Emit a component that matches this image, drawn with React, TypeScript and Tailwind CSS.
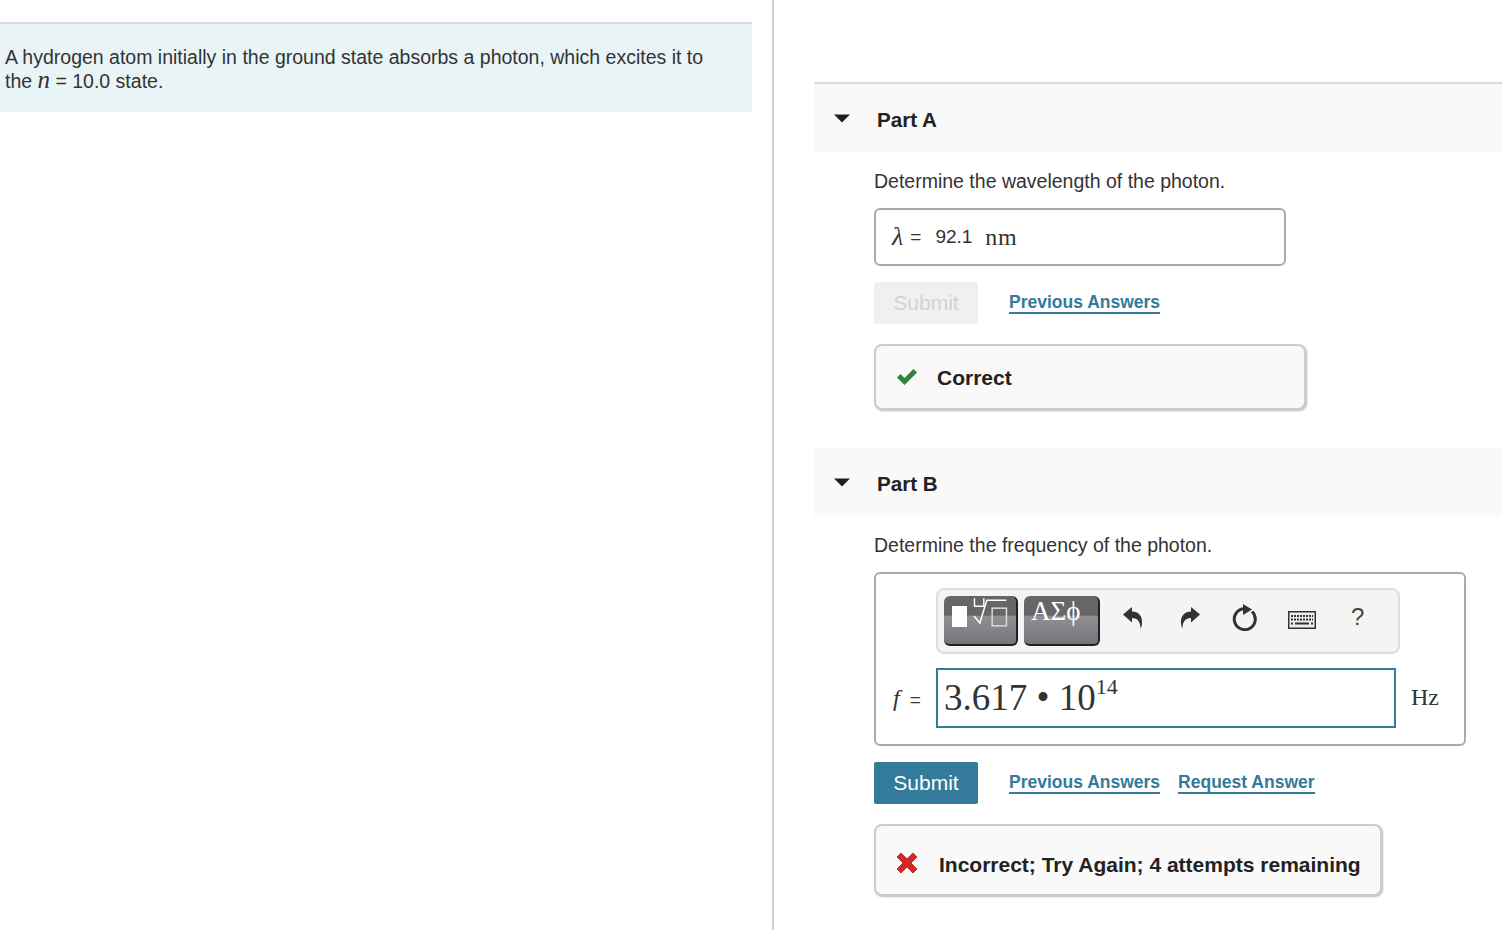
import React from 'react';

const serif = "font-['Liberation_Serif',serif]";

const Caret = () => (
  <svg width="16" height="9" viewBox="0 0 16 9" className="mt-0">
    <path d="M0 0.5H16L8 8.5Z" fill="#1f1f1f" />
  </svg>
);

const PartHeader = ({ title }: { title: string }) => (
  <div className="flex h-[68px] items-center bg-[#f9f9f9] pl-5">
    <Caret />
    <h2 className="mt-[4px] ml-[27px] text-[20.6px] font-bold text-[#222]">{title}</h2>
  </div>
);

const SubmitButton = ({ disabled }: { disabled?: boolean }) => (
  <button
    className={
      disabled
        ? 'h-[42px] w-[104px] rounded-[2px] bg-[#f0f0f0] text-[21px] text-[#d3d3d3]'
        : 'h-[42px] w-[104px] rounded-[2px] bg-[#337a9b] text-[21px] text-white'
    }
  >
    Submit
  </button>
);

const LinkText = ({ children }: { children: React.ReactNode }) => (
  <a className="border-b-2 border-[#337a9b] text-[17.5px] leading-[18px] font-bold text-[#337a9b]">{children}</a>
);

const Undo = ({ flip }: { flip?: boolean }) => (
  <svg width="22" height="24" viewBox="0 0 22 24" className={flip ? '-scale-x-100' : ''}>
    <path d="M1 9.5L10 2V6.5C16.5 6.5 20.5 11 20 18C20 20 19.5 22 18.5 23.5C18.5 17 15.5 13 10 13V17.5Z" fill="#333" />
  </svg>
);

const Keyboard = () => (
  <svg width="28" height="18" viewBox="0 0 28 18">
    <rect x="0.75" y="0.75" width="26.5" height="16.5" fill="#eee" stroke="#333" strokeWidth="1.5" />
    <path d="M3 5H25M3 8.5H25" stroke="#333" strokeWidth="2" strokeDasharray="2 1" />
    <path d="M7 12.5H21" stroke="#333" strokeWidth="2" />
    <path d="M3 12.5H5M23 12.5H25" stroke="#333" strokeWidth="2" />
  </svg>
);

const Toolbar = () => (
  <div className="flex h-[66px] w-[464px] items-center rounded-[8px] border-2 border-[#ddd] bg-[#f4f4f4] pl-[6px]">
    <div className="h-[50px] w-[74px] overflow-hidden rounded-[6px] border-r-2 border-b-2 border-[#222] bg-[linear-gradient(#666_0,#666_40%,#8f8f96_42%,#74747a_100%)]">
      <div className="flex items-start pt-[2px] pl-2">
        <span className="mt-[8px] block h-[21px] w-[15px] bg-white" />
        <svg width="44" height="38" viewBox="0 0 44 38" className="ml-[6px]">
          <path d="M1.5 0V8H11V0" fill="none" stroke="#fff" strokeWidth="1.5" />
          <path d="M1 18L7 25L14 2H34" fill="none" stroke="#fff" strokeWidth="1.5" />
          <rect x="19.5" y="10" width="14.5" height="18" fill="none" stroke="#ddd" strokeWidth="1.5" />
        </svg>
      </div>
    </div>
    <div className={`ml-[6px] h-[50px] w-[76px] overflow-hidden rounded-[6px] border-r-2 border-b-2 border-[#222] bg-[linear-gradient(#666_0,#666_40%,#8f8f96_42%,#74747a_100%)] pl-[7px] text-[27px] leading-[30px] text-white ${serif}`}>
      ΑΣϕ
    </div>
    {/* tool icons sit a little above the middle of the bar */}
    <div className="flex h-full items-center pb-2">
      <div className="ml-[22px]"><Undo /></div>
      <div className="ml-[35px]"><Undo flip /></div>
      <svg width="26" height="28" viewBox="0 0 26 28" className="ml-[31px]">
        <path d="M11.5 5.7A10.5 10.5 0 1 0 20 8.5" fill="none" stroke="#333" strokeWidth="3" />
        <path d="M11 1L20 6.5L11 12Z" fill="#333" />
      </svg>
      <div className="mt-[6px] ml-[30px]"><Keyboard /></div>
      <span className="ml-[35px] text-[24px] leading-none text-[#444]">?</span>
    </div>
  </div>
);

const Feedback = ({ width, height, children }: { width: string; height: string; children: React.ReactNode }) => (
  <div className={`flex items-center rounded-[8px] border-2 border-[#ccc] bg-[#f9f9f9] shadow-[1px_1px_2px_#bbb] ${width} ${height}`}>
    {children}
  </div>
);

export default function App() {
  return (
    <div className="flex h-[930px] overflow-hidden bg-white font-['Liberation_Sans',sans-serif] text-[#333]">
      {/* Question stem */}
      <div className="w-[774px] shrink-0 border-r-2 border-[#c3cede] pt-[22px] pr-5">
        <div className="h-[90px] border-t-2 border-[#ddd] bg-[#e9f4f7] pt-[21px] pl-[5px] text-[19.5px] leading-[24px]">
          <p>
            A hydrogen atom initially in the ground state absorbs a photon, which excites it to
            <br />
            the <i className={`text-[25px] leading-[0] ${serif}`}>n</i> = 10.0 state.
          </p>
        </div>
      </div>

      {/* Parts */}
      <div className="flex-1 pt-[82px] pl-10">
        <div className="border-t-2 border-[#ddd]">
          <PartHeader title="Part A" />
        </div>
        <div className="pl-[60px]">
          <p className="mt-[17px] text-[19.5px] leading-[24px]">Determine the wavelength of the photon.</p>
          <div className="mt-[15px] flex h-[58px] w-[412px] items-center rounded-[6px] border-2 border-[#aaa] pl-4 text-[19px]">
            <i className={`text-[26px] leading-none ${serif}`}>λ</i>
            <span className="ml-[7px]">=</span>
            <span className="ml-[14px]">92.1</span>
            <span className={`ml-[13px] text-[24px] tracking-[0.6px] ${serif}`}>nm</span>
          </div>
          <div className="mt-4 flex items-center">
            <SubmitButton disabled />
            <div className="ml-[31px]"><LinkText>Previous Answers</LinkText></div>
          </div>
          <div className="mt-5">
            <Feedback width="w-[432px]" height="h-[66px]">
              <svg width="22" height="18" viewBox="0 0 22 18" className="ml-[20px]">
                <path d="M1 9.5L4.5 6L8.5 10L17.5 1L21 4.5L8.5 17Z" fill="#34803f" />
              </svg>
              <span className="mt-[2px] ml-[19px] text-[21px] font-bold text-[#222]">Correct</span>
            </Feedback>
          </div>
        </div>

        <div className="mt-[38px]">
          <PartHeader title="Part B" />
        </div>
        <div className="pl-[60px]">
          <p className="mt-[17px] text-[19.5px] leading-[24px]">Determine the frequency of the photon.</p>
          <div className="mt-[15px] h-[174px] w-[592px] rounded-[6px] border-2 border-[#aaa] pt-[14px] pl-[60px]">
            <Toolbar />
            <div className="mt-[14px] flex items-center">
              <span className="absolute ml-[-43px] text-[19px]">
                <i className={`text-[24px] ${serif}`}>f</i>
                <span className="ml-[10px]">=</span>
              </span>
              <div className={`flex h-[60px] w-[460px] items-center border-2 border-[#337a9b] pl-[6px] text-[37px] text-[#333] ${serif}`}>
                3.617 • 10<sup className="text-[22px]">14</sup>
              </div>
              <span className={`mb-[3px] ml-[15px] text-[24px] ${serif}`}>Hz</span>
            </div>
          </div>
          <div className="mt-4 flex items-center">
            <SubmitButton />
            <div className="ml-[31px]"><LinkText>Previous Answers</LinkText></div>
            <div className="ml-[18px]"><LinkText>Request Answer</LinkText></div>
          </div>
          <div className="mt-5">
            <Feedback width="w-[508px]" height="h-[72px]">
              <svg width="22" height="22" viewBox="0 0 22 22" className="mt-[6px] ml-[20px]">
                <path d="M1 5L5 1L11 7L17 1L21 5L15 11L21 17L17 21L11 15L5 21L1 17L7 11Z" fill="#cf2a2a" strokeLinejoin="round" stroke="#cf2a2a" />
              </svg>
              <span className="mt-[10px] ml-[21px] text-[21px] font-bold text-[#222]">Incorrect; Try Again; 4 attempts remaining</span>
            </Feedback>
          </div>
        </div>
      </div>
    </div>
  );
}
